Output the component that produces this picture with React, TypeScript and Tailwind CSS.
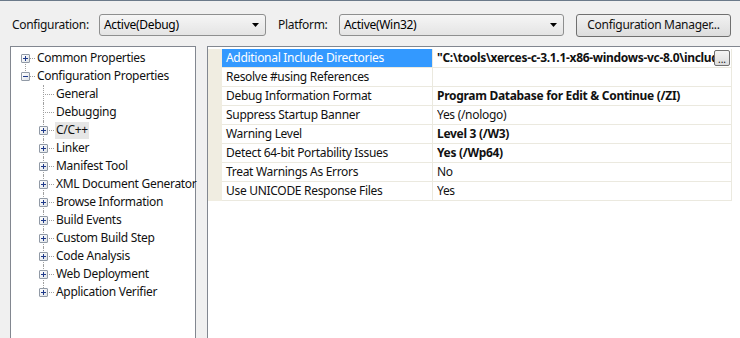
import React from 'react';

const font = { fontFamily: '"Noto Sans", "Segoe UI", sans-serif' };

const ExpandBox: React.FC<{ open?: boolean }> = ({ open }) => (
  <span className="block w-[9px] h-[9px] border border-[#919aa6] rounded-[1px] bg-gradient-to-br from-white to-[#dfe3e8] relative z-10">
    <svg width="7" height="7" viewBox="0 0 7 7" className="block">
      <rect x="1" y="3" width="5" height="1" fill="#1f3a8a" />
      {!open && <rect x="3" y="1" width="1" height="5" fill="#1f3a8a" />}
    </svg>
  </span>
);

const SelectBox: React.FC<{ value: string; width: string }> = ({ value, width }) => (
  <div className={`${width} h-[22px] border border-[#8e8f8f] rounded-[3px] bg-gradient-to-b from-[#f6f6f6] to-[#e4e4e4] flex items-center pl-[4px] pr-[6px]`}>
    <span className="flex-1 text-[12px] tracking-[-0.3px] text-black">{value}</span>
    <svg width="7" height="4" viewBox="0 0 7 4"><polygon points="0,0 7,0 3.5,4" fill="#000" /></svg>
  </div>
);

type Child = { label: string; expandable: boolean; selected?: boolean };

const children: Child[] = [
  { label: 'General', expandable: false },
  { label: 'Debugging', expandable: false },
  { label: 'C/C++', expandable: true, selected: true },
  { label: 'Linker', expandable: true },
  { label: 'Manifest Tool', expandable: true },
  { label: 'XML Document Generator', expandable: true },
  { label: 'Browse Information', expandable: true },
  { label: 'Build Events', expandable: true },
  { label: 'Custom Build Step', expandable: true },
  { label: 'Code Analysis', expandable: true },
  { label: 'Web Deployment', expandable: true },
  { label: 'Application Verifier', expandable: true },
];

type Prop = { name: string; value: string; bold?: boolean };

const props: Prop[] = [
  { name: 'Additional Include Directories', value: '"C:\\tools\\xerces-c-3.1.1-x86-windows-vc-8.0\\include"', bold: true },
  { name: 'Resolve #using References', value: '' },
  { name: 'Debug Information Format', value: 'Program Database for Edit & Continue (/ZI)', bold: true },
  { name: 'Suppress Startup Banner', value: 'Yes (/nologo)' },
  { name: 'Warning Level', value: 'Level 3 (/W3)', bold: true },
  { name: 'Detect 64-bit Portability Issues', value: 'Yes (/Wp64)', bold: true },
  { name: 'Treat Warnings As Errors', value: 'No' },
  { name: 'Use UNICODE Response Files', value: 'Yes' },
];

const Tree: React.FC = () => (
  <div className="pt-[2px] text-[12px] tracking-[-0.3px] text-[#111] whitespace-nowrap">
    {/* Common Properties */}
    <div className="h-[18px] flex items-center">
      <div className="relative w-[26px] h-full shrink-0">
        <span className="absolute left-[10px] top-[5px]"><ExpandBox /></span>
        <span className="absolute left-[18px] top-[9px] w-[6px] border-t border-dotted border-[#a0a0a0]" />
        <span className="absolute left-[14px] top-[13px] h-[9px] border-l border-dotted border-[#a0a0a0]" />
      </div>
      <span>Common Properties</span>
    </div>
    {/* Configuration Properties */}
    <div className="h-[18px] flex items-center">
      <div className="relative w-[26px] h-full shrink-0">
        <span className="absolute left-[10px] top-[5px]"><ExpandBox open /></span>
        <span className="absolute left-[18px] top-[9px] w-[6px] border-t border-dotted border-[#a0a0a0]" />
      </div>
      <span>Configuration Properties</span>
    </div>
    {children.map((c, i) => {
      const last = i === children.length - 1;
      return (
        <div key={c.label} className="h-[18px] flex items-center">
          <div className="relative w-[44px] h-full shrink-0">
            <span className={`absolute left-[32px] top-0 border-l border-dotted border-[#a0a0a0] ${last ? 'h-[9px]' : 'h-full'}`} />
            <span className="absolute left-[32px] top-[9px] w-[11px] border-t border-dotted border-[#a0a0a0]" />
            {c.expandable && <span className="absolute left-[28px] top-[5px]"><ExpandBox /></span>}
          </div>
          <span className={`h-[17px] flex items-center px-[1px] ${c.selected ? 'bg-[#e6e6e6]' : ''}`}>{c.label}</span>
        </div>
      );
    })}
  </div>
);

const Grid: React.FC = () => (
  <div className="pt-[2px] text-[12px] tracking-[-0.3px] text-[#111] flex">
    <div className="w-[14px] shrink-0 self-stretch bg-[#f0ede1]" />
    <div className="w-[510px] shrink-0 border-r border-[#ebe9df]">
      {props.map((p, i) => (
        <div key={p.name} className="h-[19px] flex border-b border-[#ebe9df]">
          <div className={`w-[211px] shrink-0 flex items-center pl-[4px] border-r border-[#ebe9df] whitespace-nowrap ${i === 0 ? 'bg-[#3399ff] text-white' : ''}`}>
            {p.name}
          </div>
          <div className={`flex-1 min-w-0 flex items-center pl-[4px] ${p.bold ? 'font-bold' : ''}`}>
            <span className="flex-1 min-w-0 whitespace-nowrap overflow-hidden">{p.value}</span>
            {i === 0 && (
              <span className="w-[16px] h-[16px] mr-[1px] border border-[#707070] rounded-[2px] bg-gradient-to-b from-[#f4f4f4] to-[#dcdcdc] flex items-end justify-center text-[10px] font-normal leading-[11px] tracking-normal shrink-0">...</span>
            )}
          </div>
        </div>
      ))}
    </div>
    <div className="flex-1" />
  </div>
);

export default function App() {
  return (
    <div className="w-[740px] h-[338px] overflow-hidden bg-[#f0f0f0] border-t border-[#6b7a8a] flex flex-col" style={font}>
      <div className="h-[45px] shrink-0 flex items-center pl-[12px] pt-[3px] text-[12px] tracking-[-0.3px] text-[#111]">
        <span className="w-[87px]">Configuration:</span>
        <SelectBox value="Active(Debug)" width="w-[167px]" />
        <span className="ml-[12px] w-[61px]">Platform:</span>
        <SelectBox value="Active(Win32)" width="w-[225px]" />
        <button className="ml-[12px] w-[155px] h-[23px] border border-[#707070] rounded-[3px] bg-gradient-to-b from-[#f2f2f2] to-[#dddddd] text-[12px] tracking-[-0.3px]">
          Configuration Manager...
        </button>
      </div>
      <div className="flex-1 flex pl-[10px]">
        <div className="w-[186px] shrink-0 bg-white border-l border-t border-r border-[#828790]">
          <Tree />
        </div>
        <div className="ml-[11px] flex-1 bg-white border-l border-t border-[#828790]">
          <Grid />
        </div>
      </div>
    </div>
  );
}
